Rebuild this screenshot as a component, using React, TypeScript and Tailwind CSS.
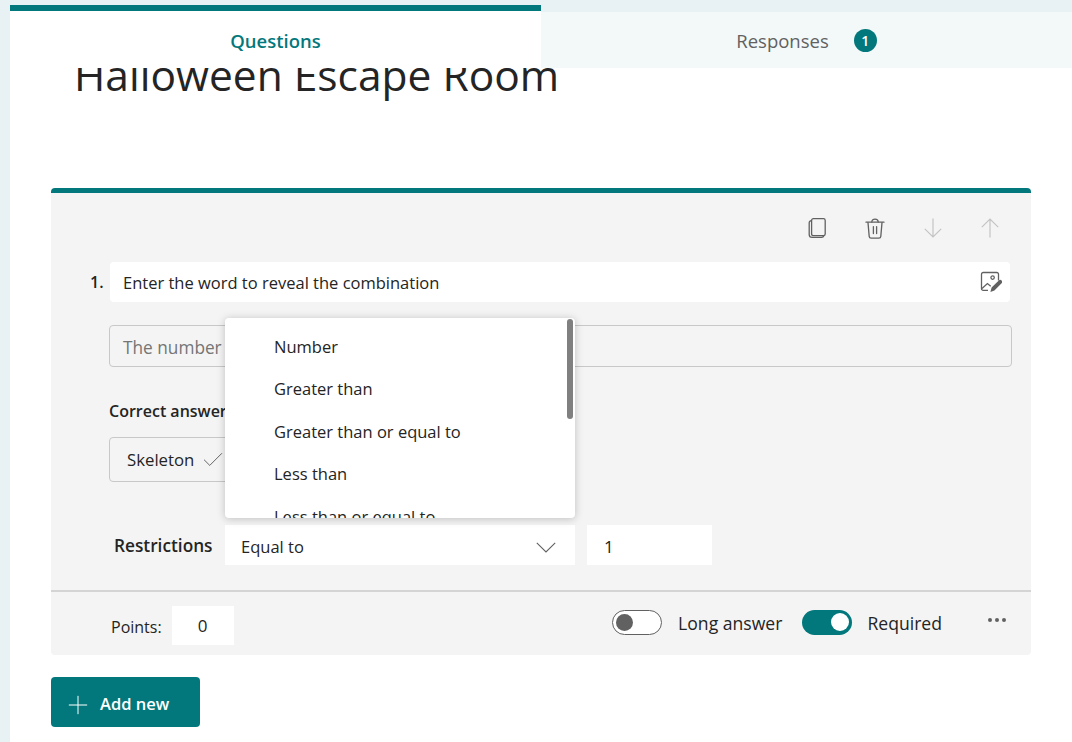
import { Plus, Check } from "lucide-react";

const OPTIONS = ["Number", "Greater than", "Greater than or equal to", "Less than", "Less than or equal to"];

const CopyIcon = () => (
  <svg width="18" height="20" viewBox="0 0 18 20" fill="none" stroke="#616161" strokeWidth="1.3">
    <rect x="3.6" y="0.7" width="13.6" height="17" rx="1.8" />
    <path d="M3.4 2.6A2.2 2.2 0 0 0 1.2 4.8v11.6a2.9 2.9 0 0 0 2.9 2.9h9.6a2.4 2.4 0 0 0 2.2-1.6" />
  </svg>
);

const TrashIcon = () => (
  <svg width="20" height="21" viewBox="0 0 20 21" fill="none" stroke="#616161" strokeWidth="1.3" strokeLinecap="round">
    <path d="M1 4.2h18" />
    <path d="M6.8 4c0-3.8 6.4-3.8 6.4 0" />
    <path d="M3 4.6l1.2 13.8a2 2 0 0 0 2 1.8h7.6a2 2 0 0 0 2-1.8L17 4.6" />
    <path d="M8.4 8.6v7M11.6 8.6v7" />
  </svg>
);

const ArrowDownIcon = () => (
  <svg width="18" height="20" viewBox="0 0 18 20" fill="none" stroke="#c4c4c4" strokeWidth="1.2">
    <path d="M9 0.5V19M0.8 10.8L9 19l8.2-8.2" />
  </svg>
);

const ArrowUpIcon = () => (
  <svg width="18" height="20" viewBox="0 0 18 20" fill="none" stroke="#c4c4c4" strokeWidth="1.2">
    <path d="M9 19.5V1M0.8 9.2L9 1l8.2 8.2" />
  </svg>
);

const ImageEditIcon = () => (
  <svg width="22" height="22" viewBox="0 0 22 22" fill="none" stroke="#616161" strokeWidth="1.3">
    <path d="M8 19.4H3.2A1.7 1.7 0 0 1 1.5 17.7V3.2A1.7 1.7 0 0 1 3.2 1.5h13.6a1.7 1.7 0 0 1 1.7 1.7v6.3" />
    <path d="M2 17.5l5.4-5 3.3 2.8" />
    <circle cx="12.6" cy="6.6" r="1.7" />
    <path d="M10.4 21l1.2-4.4 7.2-7.2a1.8 1.8 0 0 1 2.8 2.8l-7.2 7.4z" fill="#616161" stroke="none" />
  </svg>
);

export default function App() {
  return (
    <div className="h-[742px] overflow-hidden bg-[#e8f1f4] pl-[10px] pt-[5px] font-['Open_Sans','Noto_Sans',sans-serif] text-[#242424]">
      <div className="h-full bg-white">
        <div className="relative z-10 flex h-[63px]">
          <div className="flex w-[531px] items-center justify-center border-t-[6px] border-[#03787c] bg-white pt-[3px] text-[18.5px] font-semibold text-[#03787c]">
            Questions
          </div>
          <div className="-mt-px flex flex-1 flex-col">
            <div className="h-[8px] bg-[#e8f1f4]" />
            <div className="flex flex-1 items-center justify-center gap-[25px] bg-[#f3f9f9] pt-[1px] text-[18.5px] text-[#616161]">
              <span>Responses</span>
              <span className="flex h-[23px] w-[23px] items-center justify-center rounded-full bg-[#03787c] text-[14px] font-semibold text-white">
                1
              </span>
            </div>
          </div>
        </div>

        <h1 className="mt-[-21px] pl-[64px] text-[42.5px] leading-[56px] text-[#242424]">Halloween Escape Room</h1>

        <section className="relative ml-[41px] mt-[85px] w-[980px] rounded-[4px] border-t-[5px] border-[#03787c] bg-[#f4f4f4]">
          <div className="flex justify-end gap-[39px] pr-[32px] pt-[25px]">
            <CopyIcon />
            <TrashIcon />
            <ArrowDownIcon />
            <ArrowUpIcon />
          </div>

          <div className="mt-[23px] flex items-center pl-[39px] pr-[21px]">
            <span className="w-[20px] text-[16px] font-semibold">1.</span>
            <div className="flex h-[40px] flex-1 items-center justify-between rounded-[4px] bg-white pl-[13px] pr-[8px] text-[16.5px]">
              <span className="pt-[2px]">Enter the word to reveal the combination</span>
              <ImageEditIcon />
            </div>
          </div>

          <div className="ml-[58px] mr-[19px] mt-[23px] flex h-[42px] items-center rounded-[4px] border border-[#c8c8c8] pl-[13px] pt-[3px] text-[17.25px] text-[#757575]">
            The number
          </div>

          <div className="ml-[58px] mt-[33px] text-[16px] font-semibold leading-[22px]">Correct answers</div>

          <div className="ml-[58px] mt-[15px] flex h-[45px] w-[160px] items-center gap-[6px] rounded-[4px] border border-[#c8c8c8] pl-[17px] text-[16.75px]">
            <span>Skeleton</span>
            <Check size={26} strokeWidth={0.9} color="#616161" />
          </div>

          <div className="ml-[63px] mt-[43px] flex items-center">
            <span className="w-[111px] pt-[2px] text-[17.25px] font-semibold">Restrictions</span>
            <div className="flex h-[40px] w-[350px] items-center justify-between bg-white pl-[16px] pr-[19px] pt-[4px] text-[16.5px]">
              <span>Equal to</span>
              <svg width="20" height="11" viewBox="0 0 20 11" fill="none" stroke="#616161" strokeWidth="1.1">
                <path d="M0.8 0.8L10 10l9.2-9.2" />
              </svg>
            </div>
            <div className="ml-[12px] flex h-[40px] w-[125px] items-center bg-white pl-[17px] pt-[3px] text-[17px]">1</div>
          </div>

          <div className="mt-[25px] flex h-[65px] items-center border-t-2 border-[#d4d4d4] pl-[60px] pr-[25px]">
            <span className="mt-[7px] text-[16px]">Points:</span>
            <div className="ml-[10px] mt-[4px] flex h-[39px] w-[62px] items-center justify-center bg-white text-[17px]">0</div>
            <div className="-mt-[2px] ml-auto flex items-center text-[17.6px]">
              <span className="flex h-[25px] w-[50px] items-center rounded-full border border-[#616161] bg-white pl-[3px]">
                <span className="h-[17px] w-[17px] rounded-full bg-[#616161]" />
              </span>
              <span className="ml-[16px] pt-[2px]">Long answer</span>
              <span className="ml-[20px] flex h-[25px] w-[50px] items-center justify-end rounded-full bg-[#03787c] pr-[3px]">
                <span className="h-[18px] w-[18px] rounded-full bg-white" />
              </span>
              <span className="ml-[15px] pt-[2px]">Required</span>
              <span className="ml-[46px] flex gap-[3px] pb-[5px]">
                <span className="h-[4px] w-[4px] rounded-full bg-[#616161]" />
                <span className="h-[4px] w-[4px] rounded-full bg-[#616161]" />
                <span className="h-[4px] w-[4px] rounded-full bg-[#616161]" />
              </span>
            </div>
          </div>

          {/* open dropdown lying over the rows */}
          <div className="absolute left-[174px] top-[125px] h-[200px] w-[350px] overflow-hidden rounded-[4px] bg-white shadow-[0_1px_8px_rgba(0,0,0,0.22)]">
            <ul className="pl-[49px] pt-[8px] text-[16.5px]">
              {OPTIONS.map((o) => (
                <li key={o} className="flex h-[42.5px] items-center">
                  {o}
                </li>
              ))}
            </ul>
            <div className="absolute right-[2px] top-px h-[100px] w-[6px] rounded-full bg-[#808080]" />
          </div>
        </section>

        <button className="ml-[41px] mt-[22px] flex h-[50px] w-[149px] items-center gap-[7px] rounded-[4px] bg-[#03787c] pl-[12px] pt-[5px] text-[16.5px] font-semibold text-white">
          <Plus size={30} strokeWidth={0.8} />
          Add new
        </button>
      </div>
    </div>
  );
}
